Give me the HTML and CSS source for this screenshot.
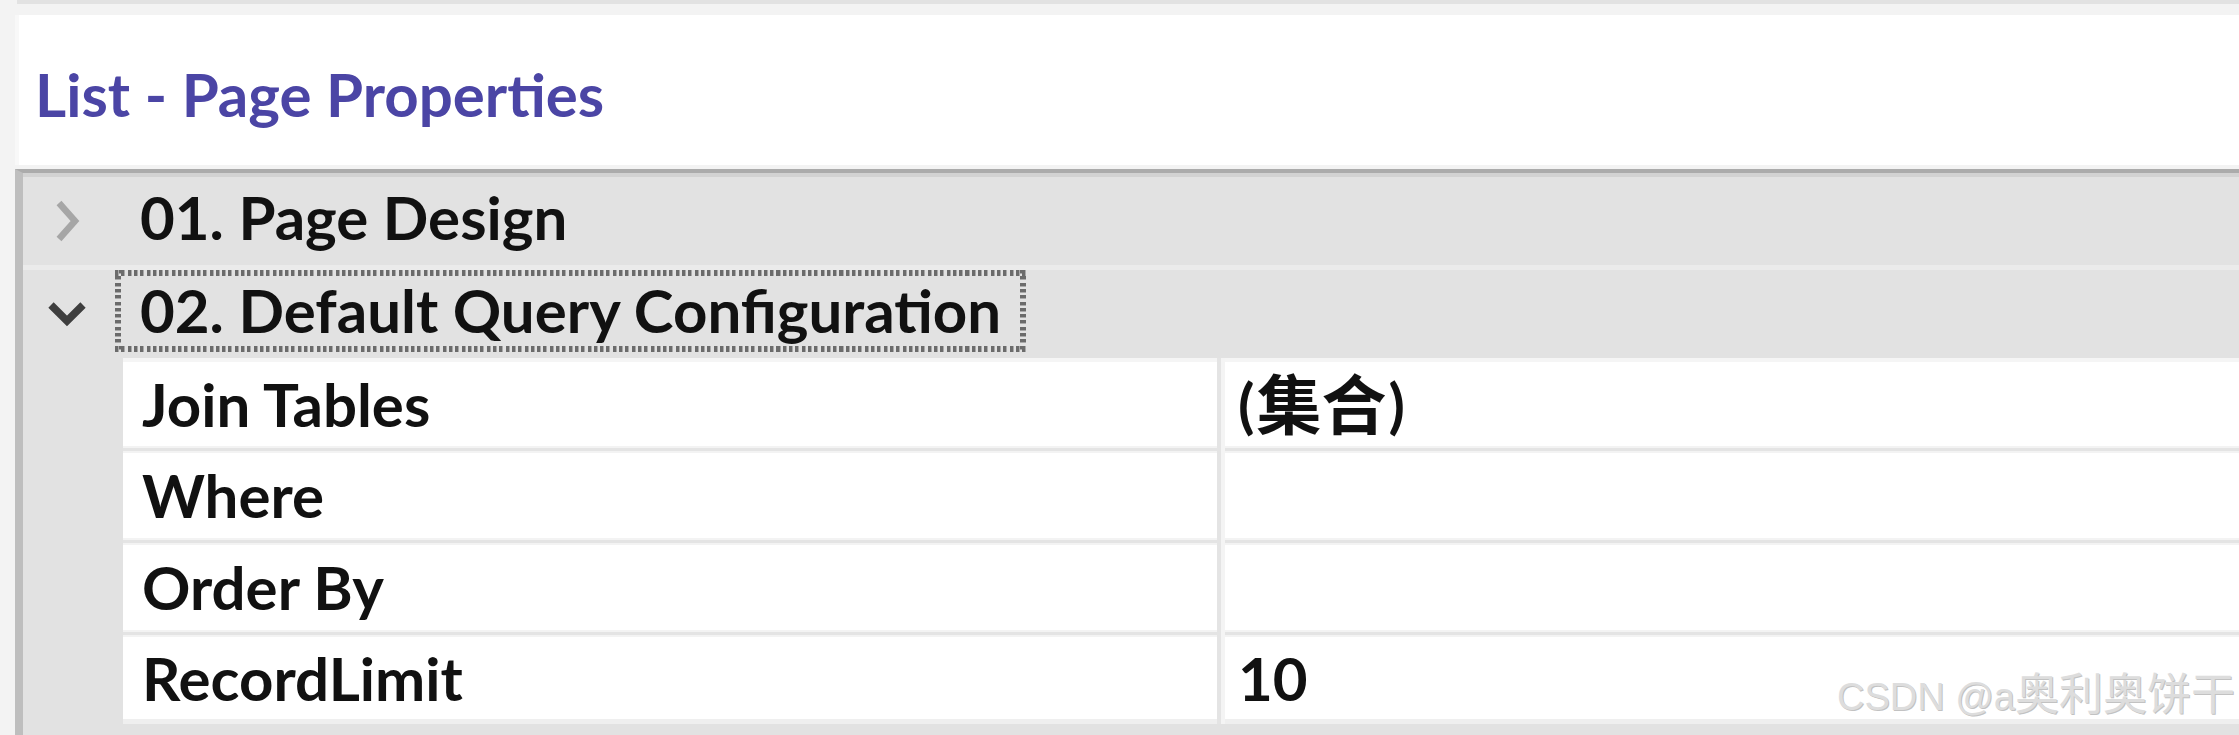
FILE: index.html
```html
<!DOCTYPE html>
<html lang="en">
<head>
<meta charset="utf-8">
<title>List - Page Properties</title>
<link rel="stylesheet" href="styles.css">
</head>
<body>
<div class="topband"></div>
<div class="titlebar">
  <h1 class="title">List - Page Properties</h1>
</div>
<div class="grid">
  <div class="cat cat-first">
    <div class="chev">
      <svg width="30" height="46" viewBox="0 0 30 46"><polyline points="7,5 23,23 7,41" fill="none" stroke="#a6a6a6" stroke-width="6.5"/></svg>
    </div>
    <div class="cat-label">01. Page Design</div>
  </div>
  <div class="cat cat-open">
    <div class="chev">
      <svg width="42" height="30" viewBox="0 0 42 30"><polyline points="5,6 21,22 37,6" fill="none" stroke="#3e3e3e" stroke-width="7.5"/></svg>
    </div>
    <div class="cat-label focus">02. Default Query Configuration</div>
  </div>
  <div class="props">
    <div class="gutter"></div><div class="name row-first">Join Tables</div><div class="value row-first">(<span class="cjk">集合</span>)</div>
    <div class="gutter"></div><div class="name">Where</div><div class="value"></div>
    <div class="gutter"></div><div class="name">Order By</div><div class="value"></div>
    <div class="gutter"></div><div class="name row-last">RecordLimit</div><div class="value row-last">10</div>
  </div>
  <div class="cat cat-next"></div>
</div>
<div class="watermark">CSDN @a<span class="wm-cjk">奥利奥饼干</span></div>
</body>
</html>
```

FILE: styles.css
```css
html, body {
  margin: 0;
  height: 735px;
  overflow: hidden;
}
body {
  position: relative;
  background: #f3f3f3;
  font-family: Lato, "Noto Sans CJK SC", sans-serif;
  color: #111;
}
.topband {
  height: 4px;
  margin-left: 17px;
  background: #e2e2e2;
}
.titlebar {
  margin: 11px 0 0 15px;
  height: 150px;
  box-sizing: border-box;
  background: #fff;
  border-left: 4px solid #f8f8f8;
  padding: 49px 0 0 16px;
}
.title {
  margin: 0;
  font-size: 60px;
  line-height: 60px;
  font-weight: 700;
  color: #4b45a5;
  white-space: nowrap;
}
.grid {
  margin: 4px 0 0 15px;
  border-top: 4px solid #ababab;
  border-left: 8px solid #bebebe;
  background: #e2e2e2;
}
.cat {
  height: 88px;
  display: flex;
  background: #e2e2e2;
}
.cat-first {
  border-top: 4px solid #d2d2d2;
  border-bottom: 5px solid #ebebeb;
}
.cat-next {
  height: 11px;
}
.chev {
  width: 88px;
  flex: none;
  display: flex;
  align-items: center;
  justify-content: center;
  padding-right: 4px;
}
.cat-label {
  align-self: flex-start;
  border: 6px solid transparent;
  padding: 4px 19px 5px;
  font-size: 60px;
  line-height: 61px;
  font-weight: 700;
  white-space: nowrap;
}
.focus {
  background-origin: border-box;
  background-clip: border-box;
  background-repeat: no-repeat;
  background-image:
    repeating-linear-gradient(90deg, #6b6b6b 0 3px, #a9a9a9 3px 4px, transparent 4px 6.3px),
    repeating-linear-gradient(90deg, #6b6b6b 0 3px, #a9a9a9 3px 4px, transparent 4px 6.3px),
    repeating-linear-gradient(180deg, #6b6b6b 0 3px, #a9a9a9 3px 4px, transparent 4px 6.3px),
    repeating-linear-gradient(180deg, #6b6b6b 0 3px, #a9a9a9 3px 4px, transparent 4px 6.3px);
  background-size: 100% 6px, 100% 6px, 6px 100%, 6px 100%;
  background-position: left top, left bottom, left top, right top;
}
.props {
  display: grid;
  grid-template-columns: 100px 1098px 1fr;
}
.gutter {
  background: #e2e2e2;
}
.name, .value {
  box-sizing: border-box;
  height: 92px;
  padding-top: 7px;
  display: flex;
  align-items: center;
  font-size: 60px;
  line-height: 61px;
  font-weight: 700;
  white-space: nowrap;
  background: #fff linear-gradient(#f3f3f3 0 2px, #e4e4e4 2px 5px, #f3f3f3 5px 7px, transparent 7px);
}
.name {
  padding-left: 19px;
  border-right: 4px solid #e4e4e4;
}
.value {
  padding-left: 13px;
  border-left: 4px solid #f4f4f4;
}
.cjk {
  font-size: 65px;
  padding: 0 2px;
}
.name.row-first, .value.row-first {
  height: 88px;
  padding-top: 4px;
  background: #fff linear-gradient(#f5f5f5 0 4px, transparent 4px);
}
.name.row-last, .value.row-last {
  height: 94px;
  padding-bottom: 5px;
  background:
    linear-gradient(to top, #efefef 0 5px, transparent 5px),
    #fff linear-gradient(#f3f3f3 0 2px, #e4e4e4 2px 5px, #f3f3f3 5px 7px, transparent 7px);
}
.watermark {
  position: absolute;
  right: 4px;
  top: 669px;
  line-height: 44px;
  font-family: "Liberation Sans", "Noto Sans CJK SC", sans-serif;
  font-size: 38px;
  color: #dddddd;
  text-shadow: 1px 1px 0 #c2c2c2;
  white-space: nowrap;
}
.wm-cjk {
  font-family: "Noto Sans CJK SC", sans-serif;
  font-size: 44px;
}
```
